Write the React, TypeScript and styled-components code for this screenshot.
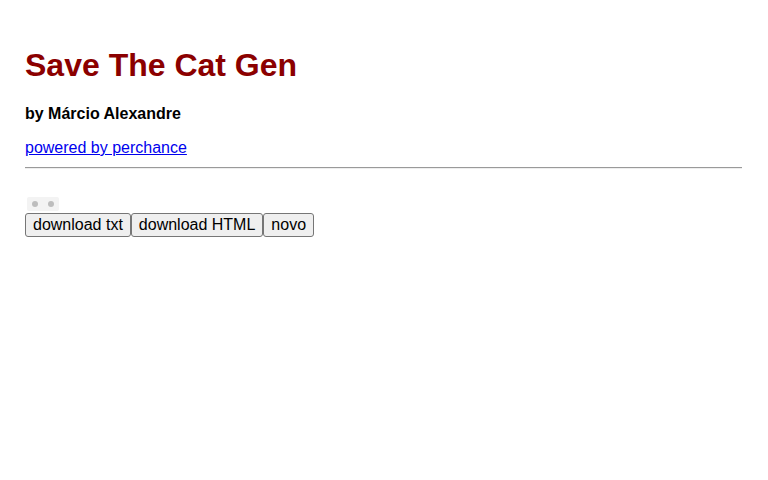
import React from "react";
import styled, { createGlobalStyle } from "styled-components";

const Global = createGlobalStyle`
  html, body { margin: 0; padding: 0; background: #fff; }
  body { font-family: "Liberation Sans", Arial, sans-serif; color: #000; }
`;

const Page = styled.div`
  padding: 26px 26px 24px 25px;
`;

const Title = styled.h1`
  font-size: 32px;
  font-weight: bold;
  color: #8b0000;
  margin: 21px 0 21px;
`;

const Byline = styled.p`
  font-size: 16px;
  font-weight: bold;
  margin: 0 0 16px;
`;

const LinkLine = styled.p`
  font-size: 16px;
  margin: 0;
`;

const Link = styled.a`
  color: #0000ee;
  text-decoration: underline;
`;

const Rule = styled.hr`
  border: none;
  border-top: 1px solid #9a9a9a;
  border-bottom: 1px solid #eeeeee;
  margin: 10px 0 24px;
`;

const Loader = styled.div`
  display: inline-flex;
  align-items: center;
  gap: 10px;
  margin-left: 2px;
  padding: 0 5px;
  height: 14px;
  background: #f3f3f3;
  border-radius: 2px;
`;

const Dot = styled.span`
  width: 6px;
  height: 6px;
  border-radius: 50%;
  background: #bdbdbd;
`;

const Buttons = styled.div`
  display: flex;
  margin-top: 2px;
`;

const Button = styled.button`
  font-family: "Liberation Sans", Arial, sans-serif;
  font-size: 16px;
  line-height: normal;
  color: #000;
  background: #efefef;
  border: 1px solid #767676;
  border-radius: 3px;
  padding: 2px 7px;
  margin: 0;
  cursor: pointer;
`;

export default function App() {
  return (
    <>
      <Global />
      <Page>
        <Title>Save The Cat Gen</Title>
        <Byline>by Márcio Alexandre</Byline>
        <LinkLine>
          <Link href="#">powered by perchance</Link>
        </LinkLine>
        <Rule />
        <Loader>
          <Dot />
          <Dot />
        </Loader>
        <Buttons>
          <Button>download txt</Button>
          <Button>download HTML</Button>
          <Button>novo</Button>
        </Buttons>
      </Page>
    </>
  );
}
